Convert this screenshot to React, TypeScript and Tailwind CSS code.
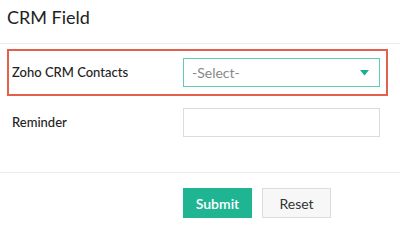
export default function App() {
  return (
    <div
      className="w-[400px] h-[233px] bg-white overflow-hidden text-[#222]"
      style={{ fontFamily: "Lato, 'Open Sans', sans-serif" }}
    >
      {/* Header */}
      <div className="h-[44px] pl-[7px] pt-[6px] border-b border-[#ececec]">
        <h1 className="text-[18px] leading-[22px] text-[#222]">CRM Field</h1>
      </div>

      {/* Fields */}
      <div className="pl-[7px] pr-[12px] pt-[5px]">
        <div className="h-[47px] border-2 border-[#e4604c] flex items-center">
          <label className="w-[174px] pl-[3px] text-[13px] font-medium text-[#222]">
            Zoho CRM Contacts
          </label>
          <div className="w-[197px] h-[29px] border border-[#5fcdb2] flex items-center justify-between pl-[8px] pr-[10px]">
            <span className="text-[14px] text-[#888]">-Select-</span>
            <svg width="9" height="6" viewBox="0 0 9 6">
              <path d="M0 0 L9 0 L4.5 5.5 Z" fill="#1fae8d" />
            </svg>
          </div>
        </div>
        <div className="h-[29px] mt-[12px] flex items-center">
          <label className="w-[176px] pl-[5px] text-[13px] font-medium text-[#222]">
            Reminder
          </label>
          <input className="w-[197px] h-[29px] border border-[#dcdcdc] outline-none" />
        </div>
      </div>

      {/* Actions */}
      <div className="mt-[35px] border-t border-[#ececec] pt-[15px] pl-[183px] flex gap-[10px]">
        <button className="w-[69px] h-[30px] bg-[#1fb592] text-white text-[14px] font-semibold">
          Submit
        </button>
        <button className="w-[69px] h-[30px] bg-[#f7f7f7] border border-[#dcdcdc] text-[#333] text-[14px]">
          Reset
        </button>
      </div>
    </div>
  );
}
